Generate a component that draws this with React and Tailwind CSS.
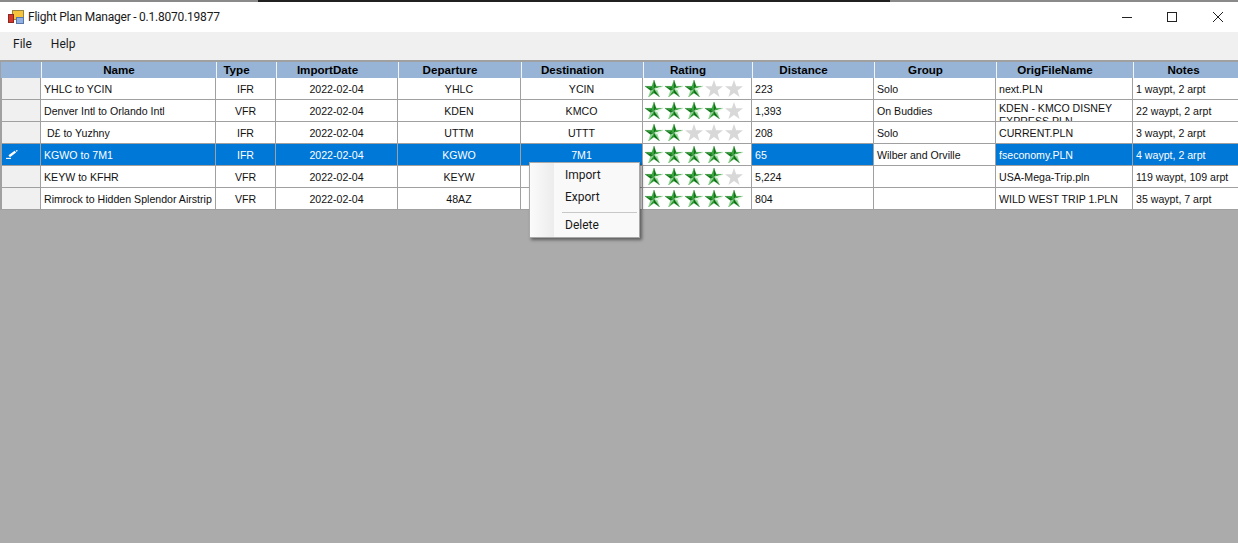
import React from 'react';

const cols = 'grid grid-cols-[40px_175px_60px_122px_123px_122px_109px_122px_122px_137px_120px]';

const headers = ['Name', 'Type', 'ImportDate', 'Departure', 'Destination', 'Rating', 'Distance', 'Group', 'OrigFileName', 'Notes'];

const rows = [
  { name: 'YHLC to YCIN', type: 'IFR', dep: 'YHLC', dest: 'YCIN', stars: 3, dist: '223', group: 'Solo', file: 'next.PLN', notes: '1 waypt, 2 arpt' },
  { name: 'Denver Intl to Orlando Intl', type: 'VFR', dep: 'KDEN', dest: 'KMCO', stars: 4, dist: '1,393', group: 'On Buddies', file: 'KDEN - KMCO DISNEY EXPRESS.PLN', notes: '22 waypt, 2 arpt', wrap: true },
  { name: ' D£ to Yuzhny', type: 'IFR', dep: 'UTTM', dest: 'UTTT', stars: 2, dist: '208', group: 'Solo', file: 'CURRENT.PLN', notes: '3 waypt, 2 arpt' },
  { name: 'KGWO to 7M1', type: 'IFR', dep: 'KGWO', dest: '7M1', stars: 5, dist: '65', group: 'Wilber and Orville', file: 'fseconomy.PLN', notes: '4 waypt, 2 arpt', selected: true },
  { name: 'KEYW to KFHR', type: 'VFR', dep: 'KEYW', dest: '', stars: 4, dist: '5,224', group: '', file: 'USA-Mega-Trip.pln', notes: '119 waypt, 109 arpt' },
  { name: 'Rimrock to Hidden Splendor Airstrip', type: 'VFR', dep: '48AZ', dest: '', stars: 5, dist: '804', group: '', file: 'WILD WEST TRIP 1.PLN', notes: '35 waypt, 7 arpt' },
];

// outer tips and inner corners of the star, clockwise from the top
const pts = [
  [9, 0], [11.2, 6.2], [18, 6.3], [12.6, 10.4], [14.6, 17],
  [9, 13.1], [3.4, 17], [5.4, 10.4], [0, 6.3], [6.8, 6.2],
];
const facets = ['#0f6f16', '#2f9c34', '#e6f6e6', '#9ad89c', '#0c7013', '#2a9a30', '#8ed190', '#12791a', '#1a8a20', '#36a43b'];

const Star = ({ on }) => (
  <svg width="18" height="17" viewBox="0 0 18 17" className="shrink-0">
    {on
      ? pts.map((p, i) => {
          const q = pts[(i + 1) % pts.length];
          return <polygon key={i} points={`9,9 ${p[0]},${p[1]} ${q[0]},${q[1]}`} fill={facets[i]} stroke={facets[i]} strokeWidth="0.2" />;
        })
      : <polygon points={pts.map((p) => p.join(',')).join(' ')} fill="#d8d8d8" />}
  </svg>
);

const Cell = ({ children, center, selected, className = '' }) => (
  <div className={`h-[22px] border-r border-b border-[#a0a0a0] flex overflow-hidden whitespace-pre px-[3px] ${center ? 'justify-center' : ''} ${selected ? 'bg-[#0078d7] text-white' : 'bg-white text-[#111]'} ${className || 'items-center pt-[2px]'}`}>
    {children}
  </div>
);

const PencilMark = () => (
  <svg width="12" height="9" viewBox="0 0 12 9" fill="none" stroke="white" className="ml-[4px]">
    <path d="M0 8.4h5" strokeWidth="1.1" />
    <path d="M3.2 6.2 9.4 1.6" strokeWidth="2.4" />
    <path d="M10 1.2 11.4 0.4" strokeWidth="1.2" />
  </svg>
);

const App = () => {
  return (
    <div className="w-[1238px] h-[543px] overflow-hidden bg-[#ababab] flex flex-col font-['Liberation_Sans',sans-serif] text-[10.6px] relative">
      <div className="h-[2px] shrink-0 flex">
        <div className="w-[258px] bg-[#8a8a8a]" />
        <div className="w-[632px] bg-[#202020]" />
        <div className="flex-1 bg-[#8a8a8a]" />
      </div>
      <div className="h-[30px] bg-white flex items-center shrink-0">
        <svg width="18" height="16" viewBox="0 0 18 16" className="ml-[7px] shrink-0">
          <rect x="5.5" y="1.5" width="11" height="9" fill="#f5c43c" stroke="#9a8240" />
          <rect x="9.5" y="8.5" width="7" height="6" fill="#8fb0e0" stroke="#5a76a8" />
          <rect x="1.5" y="5.5" width="5" height="8" fill="#d8352a" stroke="#8a2a22" />
        </svg>
        <span className="ml-[3px] font-['Roboto',sans-serif] text-[12px] tracking-[-0.22px] text-[#1a1a1a]">Flight Plan Manager - 0.1.8070.19877</span>
        <div className="ml-auto mr-[15px] flex items-center gap-[35px] text-[#222]">
          <svg width="10" height="10" viewBox="0 0 10 10" stroke="currentColor" fill="none"><path d="M0 5.5h10" /></svg>
          <svg width="10" height="10" viewBox="0 0 10 10" stroke="currentColor" fill="none"><rect x="0.5" y="0.5" width="9" height="9" /></svg>
          <svg width="10" height="10" viewBox="0 0 10 10" stroke="currentColor" fill="none" className="ml-[1px]"><path d="M0 0l10 10M10 0 0 10" /></svg>
        </div>
      </div>
      <div className="h-[28px] pb-[4px] bg-[#f0f0f0] flex items-center shrink-0 font-['Roboto',sans-serif] text-[12px] text-[#1a1a1a]">
        <span className="ml-[13px]">File</span>
        <span className="ml-[19px]">Help</span>
      </div>
      <div className="pl-[1px] border-t-[2px] border-[#a0a0a0] bg-[#a0a0a0] shrink-0">
        <div className={`${cols} h-[16px] bg-[#97b4d6] font-bold text-[11.6px] leading-none text-black`}>
          <div className="ml-[1px]" />
          {headers.map((h) => (
            <div key={h} className="border-l border-[#f4f4f4] pr-[20px] pb-[1px] flex items-center justify-center">{h}</div>
          ))}
        </div>
        {rows.map((r) => (
          <div key={r.name} className={cols}>
            <div className={`h-[22px] ml-[1px] border-r border-b border-[#a0a0a0] flex items-center ${r.selected ? 'bg-[#0078d7]' : 'bg-[#f0f0f0]'}`}>
              {r.selected && <PencilMark />}
            </div>
            <Cell selected={r.selected}>{r.name}</Cell>
            <Cell center selected={r.selected}>{r.type}</Cell>
            <Cell center selected={r.selected}>2022-02-04</Cell>
            <Cell center selected={r.selected}>{r.dep}</Cell>
            <Cell center selected={r.selected}>{r.dest}</Cell>
            <Cell className="items-center gap-[2px] !px-[2px]">
              {[1, 2, 3, 4, 5].map((n) => <Star key={n} on={n <= r.stars} />)}
            </Cell>
            <Cell selected={r.selected}>{r.dist}</Cell>
            <Cell>{r.group}</Cell>
            <Cell selected={r.selected} className={r.wrap ? 'items-start !whitespace-normal leading-[13px] pt-[2px]' : 'items-center pt-[2px]'}>
              {r.file}
            </Cell>
            <Cell selected={r.selected}>{r.notes}</Cell>
          </div>
        ))}
      </div>
      <div className="absolute left-[529px] top-[162px] w-[111px] h-[76px] bg-[#f9f9f9] border border-[#a8a8a8] shadow-[2px_2px_3px_rgba(0,0,0,0.45)] font-['Roboto',sans-serif] text-[12px] text-[#1a1a1a]">
        <div className="absolute left-0 top-0 bottom-0 w-[24px] bg-linear-to-r from-[#fbfbfb] to-[#ececec]" />
        <div className="relative pl-[35px] pt-[1px] leading-[22px]">
          <div>Import</div>
          <div>Export</div>
          <div className="h-px bg-[#c8c8c8] ml-[-3px] mr-[2px] mt-[4px] mb-[1px]" />
          <div>Delete</div>
        </div>
      </div>
    </div>
  );
};

export default App;
